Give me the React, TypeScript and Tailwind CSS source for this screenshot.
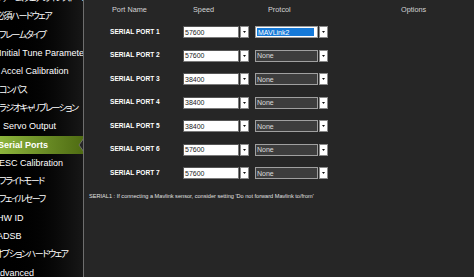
const menu = [
  { label: "ファームウェアのインストール", jp: true, off: -4 },
  { label: "必須ハードウェア", jp: true, off: -4 },
  { label: "フレームタイプ", jp: true, off: -1 },
  { label: "Initial Tune Parameter", jp: false, off: -1 },
  { label: "Accel Calibration", jp: false, off: 1 },
  { label: "コンパス", jp: true, off: -1 },
  { label: "ラジオキャリブレーション", jp: true, off: -1 },
  { label: "Servo Output", jp: false, off: 3 },
  { label: "Serial Ports", jp: false, off: -2, active: true },
  { label: "ESC Calibration", jp: false, off: -1 },
  { label: "フライトモード", jp: true, off: -1 },
  { label: "フェイルセーフ", jp: true, off: -1 },
  { label: "HW ID", jp: false, off: -3 },
  { label: "ADSB", jp: false, off: -3 },
  { label: "オプションハードウェア", jp: true, off: -5 },
  { label: "Advanced", jp: false, off: -6 },
];

const ports = [
  { name: "SERIAL PORT 1", speed: "57600", proto: "MAVLink2", selected: true },
  { name: "SERIAL PORT 2", speed: "57600", proto: "None" },
  { name: "SERIAL PORT 3", speed: "38400", proto: "None" },
  { name: "SERIAL PORT 4", speed: "38400", proto: "None" },
  { name: "SERIAL PORT 5", speed: "38400", proto: "None" },
  { name: "SERIAL PORT 6", speed: "57600", proto: "None" },
  { name: "SERIAL PORT 7", speed: "57600", proto: "None" },
];

function Arrow() {
  return (
    <div className="w-[9px] h-[12px] bg-white border border-[#8a8a8a] flex items-center justify-center">
      <svg width="3" height="2" viewBox="0 0 3 2">
        <polygon points="0,0 3,0 1.5,2" fill="#111" />
      </svg>
    </div>
  );
}

function SpeedBox({ value }: { value: string }) {
  return (
    <div className="flex items-center gap-[1px]">
      <div className="w-[56px] h-[12px] bg-white border border-[#7a7a7a] border-t-[#555] border-l-[#555] flex items-center pl-[1px] text-[7px] text-[#222] leading-none">
        {value}
      </div>
      <Arrow />
    </div>
  );
}

function ProtoBox({ value, selected }: { value: string; selected?: boolean }) {
  return (
    <div className="flex items-center gap-[1px]">
      <div
        className={
          selected
            ? "w-[63px] h-[12px] bg-white border border-[#9a9a9a] flex items-center p-[1px]"
            : "w-[63px] h-[12px] bg-[#3d3d3d] border border-[#a0a0a0] flex items-center pl-[1px]"
        }
      >
        {selected ? (
          <span className="h-full w-[57px] bg-[#1579d8] text-white text-[7px] leading-none flex items-center pl-[1px]">
            {value}
          </span>
        ) : (
          <span className="text-[#dcdcdc] text-[7px] leading-none">{value}</span>
        )}
      </div>
      <Arrow />
    </div>
  );
}

export default function App() {
  return (
    <div
      className="w-[474px] h-[277px] flex overflow-hidden bg-[#262626]"
      style={{ fontFamily: '"Liberation Sans", "Noto Sans CJK JP", sans-serif' }}
    >
      {/* Sidebar */}
      <div className="relative w-[84px] shrink-0 h-full overflow-hidden bg-gradient-to-r from-black to-[#171717] border-r border-[#6e6e6e]">
        <div className="-mt-[10.5px] flex flex-col">
          {menu.map((m) => (
            <div
              key={m.label}
              className={
                m.active
                  ? "relative h-[18.3px] flex items-center whitespace-nowrap bg-gradient-to-r from-[#8cb43c] to-[#4f6c12] text-white font-bold"
                  : "relative h-[18.3px] flex items-center whitespace-nowrap text-white"
              }
            >
              <span
                className={
                  m.jp
                    ? "text-[9px] leading-none [font-feature-settings:'palt'] tracking-[-1.4px]"
                    : "text-[9px] leading-none"
                }
                style={{ marginLeft: m.off }}
              >
                {m.label}
              </span>
              {m.active && (
                <svg className="absolute right-[-1px] top-[2px]" width="6" height="14" viewBox="0 0 6 14">
                  <polygon points="6,0 1,7 6,14" fill="#262626" stroke="#7a7a7a" strokeWidth="0.8" />
                </svg>
              )}
            </div>
          ))}
        </div>
      </div>

      {/* Main */}
      <div className="flex-1 flex flex-col pt-[1px]">
        <div className="h-[19.5px] flex items-center pl-[28px] text-[7.3px] text-[#d4d4d4]">
          <span className="w-[81px]">Port Name</span>
          <span className="w-[75px]">Speed</span>
          <span className="w-[133px]">Protcol</span>
          <span>Options</span>
        </div>
        {ports.map((p) => (
          <div key={p.name} className="h-[23.5px] flex items-center pl-[26px]">
            <span className="w-[73px] text-[6.6px] font-bold text-white leading-none">{p.name}</span>
            <SpeedBox value={p.speed} />
            <div className="w-[6px]" />
            <ProtoBox value={p.proto} selected={p.selected} />
          </div>
        ))}
        <div className="mt-[9px] pl-[5px] text-[5.6px] text-[#e0e0e0] leading-none whitespace-nowrap">
          SERIAL1 : If connecting a Mavlink sensor, consider setting 'Do not forward Mavlink to/from'
        </div>
      </div>
    </div>
  );
}
